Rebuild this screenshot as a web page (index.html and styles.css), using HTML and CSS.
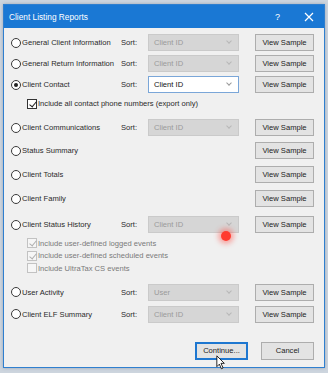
FILE: index.html
```html
<!DOCTYPE html>
<html lang="en">
<head>
    <meta charset="UTF-8" />
    <title>Client Listing Reports</title>
    <link rel="stylesheet" href="styles.css">
</head>
<body>
<div class="dialog">
    <header class="titlebar">
        <span class="title">Client Listing Reports</span>
        <span class="help">?</span>
        <span class="close">
            <svg width="10" height="10" viewBox="0 0 10 10"><path d="M1 1L9 9M9 1L1 9" stroke="#fff" stroke-width="1.2"/></svg>
        </span>
    </header>

    <main class="content">
        <div class="row r1">
            <label class="radio-label"><span class="radio"></span>General Client Information</label>
            <span class="sort">Sort:</span>
            <div class="select disabled">Client ID<span class="chev"></span></div>
            <button class="btn">View Sample</button>
        </div>
        <div class="row">
            <label class="radio-label"><span class="radio"></span>General Return Information</label>
            <span class="sort">Sort:</span>
            <div class="select disabled">Client ID<span class="chev"></span></div>
            <button class="btn">View Sample</button>
        </div>
        <div class="row">
            <label class="radio-label"><span class="radio checked"></span>Client Contact</label>
            <span class="sort">Sort:</span>
            <div class="select active">Client ID<span class="chev"></span></div>
            <button class="btn">View Sample</button>
        </div>
        <div class="check-row main-check">
            <span class="box checked"></span>Include all contact phone numbers (export only)
        </div>
        <div class="row gap5">
            <label class="radio-label"><span class="radio"></span>Client Communications</label>
            <span class="sort">Sort:</span>
            <div class="select disabled">Client ID<span class="chev"></span></div>
            <button class="btn">View Sample</button>
        </div>
        <div class="row gap2">
            <label class="radio-label"><span class="radio"></span>Status Summary</label>
            <button class="btn push">View Sample</button>
        </div>
        <div class="row gap3">
            <label class="radio-label"><span class="radio"></span>Client Totals</label>
            <button class="btn push">View Sample</button>
        </div>
        <div class="row gap3">
            <label class="radio-label"><span class="radio"></span>Client Family</label>
            <button class="btn push">View Sample</button>
        </div>
        <div class="row gap5">
            <label class="radio-label"><span class="radio"></span>Client Status History</label>
            <span class="sort">Sort:</span>
            <div class="select disabled">Client ID<span class="chev"></span></div>
            <button class="btn">View Sample</button>
        </div>
        <div class="sub-checks">
            <div class="check-row sub"><span class="box checked dim"></span>Include user-defined logged events</div>
            <div class="check-row sub"><span class="box checked dim"></span>Include user-defined scheduled events</div>
            <div class="check-row sub"><span class="box dim"></span>Include UltraTax CS events</div>
        </div>
        <div class="row gap7">
            <label class="radio-label"><span class="radio"></span>User Activity</label>
            <span class="sort">Sort:</span>
            <div class="select disabled">User<span class="chev"></span></div>
            <button class="btn">View Sample</button>
        </div>
        <div class="row gap1">
            <label class="radio-label"><span class="radio"></span>Client ELF Summary</label>
            <span class="sort">Sort:</span>
            <div class="select disabled">Client ID<span class="chev"></span></div>
            <button class="btn">View Sample</button>
        </div>

        <footer class="footer">
            <button class="btn wide focused">Continue...</button>
            <button class="btn wide">Cancel</button>
        </footer>
    </main>

    <span class="click-dot"></span>
    <svg class="pointer" width="10" height="15" viewBox="0 0 12 18">
        <path d="M1 1L1 14L4 11L6.5 16.5L8.5 15.5L6 10L10 10Z" fill="#fff" stroke="#000" stroke-width="1"/>
    </svg>
</div>
</body>
</html>
```

FILE: styles.css
```css
:root {
    --title-blue: #1a78d4;
    --face: #f0f0f0;
    --text: #2a2a2a;
    --muted: #7a7a7a;
    --font: 'Liberation Sans', Arial, sans-serif;
}

* { box-sizing: border-box; margin: 0; }

body {
    background: #cdd5de;
    font-family: var(--font);
    padding: 4px 3px 5px 3px;
    width: 328px;
    height: 373px;
    overflow: hidden;
}

.dialog {
    position: relative;
    width: 322px;
    height: 364px;
    border: 1px solid #2f7fcf;
    background: var(--face);
    box-shadow: 0 0 3px rgba(60, 80, 110, 0.35);
}

.titlebar {
    height: 23px;
    background: var(--title-blue);
    color: #fff;
    display: flex;
    align-items: center;
    padding-left: 5px;
}
.title { font-size: 8.3px; flex: 1; }
.help { font-size: 9px; margin-right: 24px; }
.close { display: flex; margin-right: 10px; }

.content {
    padding: 4px 10px 0 7px;
    font-size: 7.6px;
    color: var(--text);
}

.row {
    display: flex;
    align-items: center;
    height: 21px;
}
.gap1 { margin-top: 1px; }
.gap2 { margin-top: 2px; }
.gap3 { margin-top: 3px; }
.gap5 { margin-top: 5px; }
.gap7 { margin-top: 7px; }

.radio-label {
    display: flex;
    align-items: center;
    width: 110px;
    white-space: nowrap;
}
.radio {
    width: 10px;
    height: 10px;
    border: 1px solid #3a3a3a;
    border-radius: 50%;
    background: #fff;
    margin-right: 1px;
    position: relative;
}
.radio.checked::after {
    content: '';
    position: absolute;
    left: 2px; top: 2px;
    width: 4px; height: 4px;
    border-radius: 50%;
    background: #222;
}

.sort { width: 27px; }

.select {
    width: 91px;
    height: 17px;
    border: 1px solid #c4c4c4;
    padding-left: 5px;
    display: flex;
    align-items: center;
    justify-content: space-between;
    padding-right: 7px;
}
.select.disabled { background: #d6d6d6; color: #9a9a9a; border-color: #cacaca; }
.select.active { background: #fff; border-color: #7aa6d8; color: #111; }
.chev {
    width: 4px; height: 4px;
    border-right: 1px solid #999;
    border-bottom: 1px solid #999;
    transform: rotate(45deg);
    margin-top: -3px;
}
.select.disabled .chev { border-color: #b8b8b8; }

.btn {
    width: 59px;
    height: 17px;
    margin-left: 16px;
    background: #e3e3e3;
    border: 1px solid #adadad;
    font-family: var(--font);
    font-size: 7.6px;
    color: #222;
    padding: 0;
}
.btn.push { margin-left: auto; }

.check-row {
    display: flex;
    align-items: center;
    white-space: nowrap;
}
.main-check { height: 17px; padding-left: 16px; }
.sub-checks { margin-top: 2px; }
.check-row.sub { height: 12.5px; padding-left: 16px; color: var(--muted); }

.box {
    width: 10px;
    height: 10px;
    border: 1px solid #333;
    background: #fff;
    margin-right: 1px;
    position: relative;
}
.box.dim { border-color: #c2c2c2; background: #f6f6f6; }
.box.checked::after {
    content: '';
    position: absolute;
    left: 2.5px; top: 0;
    width: 3px; height: 6px;
    border-right: 1px solid #222;
    border-bottom: 1px solid #222;
    transform: rotate(40deg);
}
.box.dim.checked::after { border-color: #b0b0b0; }

.footer {
    display: flex;
    justify-content: flex-end;
    gap: 13px;
    margin-top: 17px;
}
.btn.wide { width: 53px; height: 18px; margin-left: 0; }
.btn.focused { border: 2px solid #1e77d0; }

.click-dot {
    position: absolute;
    left: 217px;
    top: 226px;
    width: 10px;
    height: 10px;
    border-radius: 50%;
    background: #ff3b30;
    box-shadow: 0 0 5px 3px rgba(255, 80, 70, 0.45);
}
.pointer {
    position: absolute;
    left: 212px;
    top: 350px;
}
```
